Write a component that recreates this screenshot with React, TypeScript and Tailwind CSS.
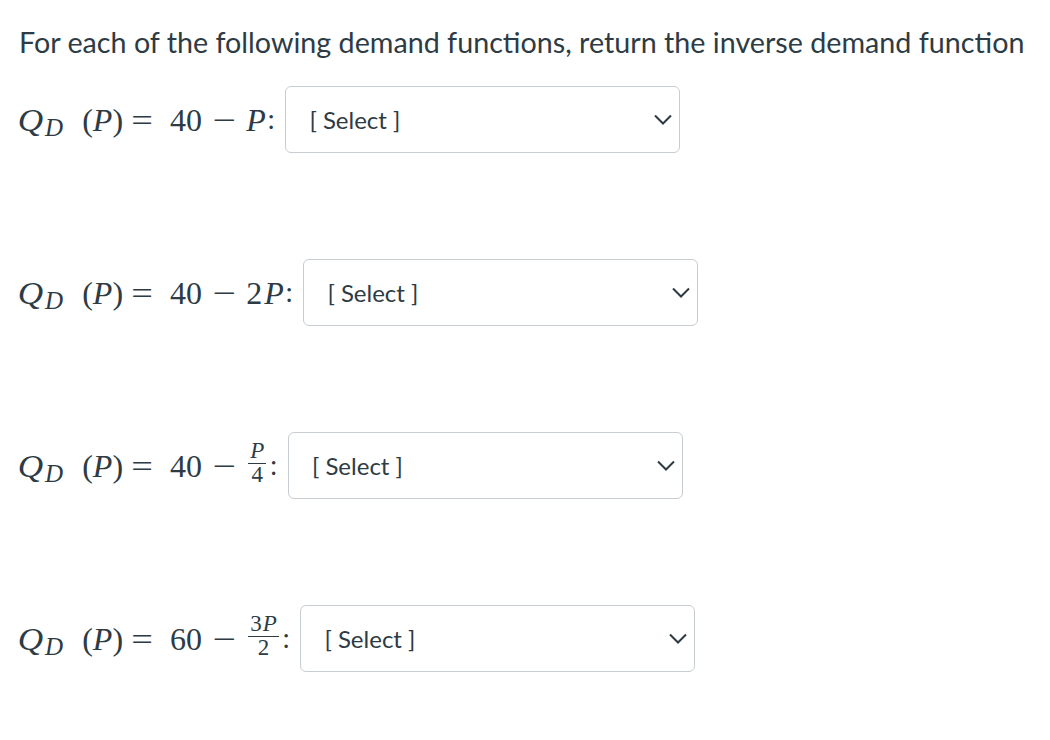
const rows = [
  { key: 'a', c: '40', rhs: <i>P</i> },
  { key: 'b', c: '40', rhs: <>2<i className="ml-[2px]">P</i></> },
  { key: 'c', c: '40', rhs: <Frac top={<i>P</i>} bottom="4" /> },
  { key: 'd', c: '60', rhs: <Frac top={<>3<i className="ml-[1px]">P</i></>} bottom="2" /> },
];

function Frac({ top, bottom }: { top: React.ReactNode; bottom: React.ReactNode }) {
  return (
    <span className="inline-flex flex-col items-center align-middle text-[23px] leading-[22px] mx-[2px] relative top-[-3px]">
      <span className="px-[2px] border-b border-[#2d3b45] pb-[1px]">{top}</span>
      <span>{bottom}</span>
    </span>
  );
}

function Chevron() {
  return (
    <svg width="18" height="11" viewBox="0 0 18 11" fill="none">
      <path d="M1 1.5 L9 9.5 L17 1.5" stroke="#2d3b45" strokeWidth="2" />
    </svg>
  );
}

function SelectBox() {
  return (
    <div className="w-[395px] h-[67px] border border-[#c7cdd1] rounded-[6px] bg-white flex items-center justify-between pl-[23px] pr-[7px] text-[24px] text-[#2d3b45]">
      <span>[ Select ]</span>
      <Chevron />
    </div>
  );
}

export default function App() {
  return (
    <div className="min-h-screen bg-white text-[#2d3b45] font-['Lato',sans-serif] pl-[19px] pt-[24px]">
      <p className="text-[28.7px] leading-[36px]">
        For each of the following demand functions, return the inverse demand function
      </p>
      <div className="flex flex-col gap-[106px] mt-[26px]">
        {rows.map(r => (
          <div key={r.key} className="flex items-center">
            <span className="font-['Liberation_Serif',serif] text-[32px] text-[#2d3b45] whitespace-nowrap flex items-center">
              <i className="inline-block scale-x-[1.1]">Q</i>
              <i className="text-[25px] relative top-[8px] ml-[3px]">D</i>
              <span className="ml-[19px]">(<i>P</i>)</span>
              <span className="ml-[10px] mr-[19px] inline-block scale-x-[1.2]">=</span>
              <span>{r.c}</span>
              <span className="ml-[13px] mr-[13px] inline-block scale-x-[1.3]">−</span>
              {r.rhs}
            </span>
            <span className="text-[27px] ml-[2px] mr-[11px]">:</span>
            <SelectBox />
          </div>
        ))}
      </div>
    </div>
  );
}
